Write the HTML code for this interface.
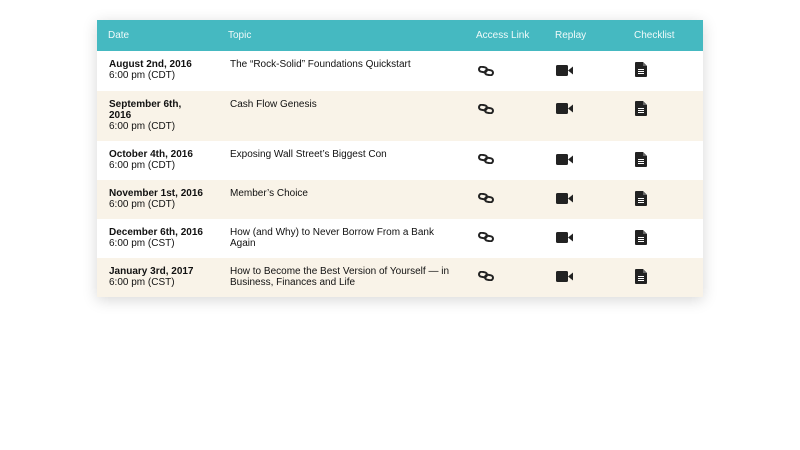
<!DOCTYPE html>
<html><head><style>
body{margin:0;background:#fff;font-family:"Liberation Sans",sans-serif;}
.t{position:absolute;left:97px;top:20px;width:606px;box-shadow:0 3px 14px rgba(0,0,0,.16);}
.h{height:31px;background:#45b9c1;color:#f0fafa;font-size:10px;position:relative}
.h span{position:absolute;top:10px}
.r{position:relative;font-size:10px;color:#111;line-height:11px}
.a{background:#f9f3e8}.b{background:#fff}
.d{position:absolute;left:12px;top:8px;width:105px}
.tp{position:absolute;left:133px;top:8px;width:222px}
.i{position:absolute}
</style></head><body>
<div class="t">
<div class="h"><span style="left:11px">Date</span><span style="left:131px">Topic</span><span style="left:379px">Access Link</span><span style="left:458px">Replay</span><span style="left:537px">Checklist</span></div>

<div class="r b" style="height:40px"><div class="d"><b>August 2nd, 2016</b><br>6:00 pm (CDT)</div><div class="tp">The “Rock-Solid” Foundations Quickstart</div>
<svg class="i" style="left:381px;top:15px" width="16" height="10" viewBox="0 0 16 10"><g fill="none" stroke="#222" stroke-width="2"><rect x="1" y="1" width="8" height="5" rx="2.5" transform="rotate(10 5 3.5)"/><rect x="7" y="4" width="8" height="5" rx="2.5" transform="rotate(10 11 6.5)"/></g></svg>
<svg class="i" style="left:459px;top:14px" width="18" height="11" viewBox="0 0 18 11"><rect x="0" y="0" width="12" height="11" rx="1.5" fill="#222"/><path d="M12 5.5 L17 1.5 V9.5Z" fill="#222"/></svg>
<svg class="i" style="left:538px;top:11px" width="12" height="15" viewBox="0 0 12 15"><path d="M0 1Q0 0 1 0H8L12 4V14Q12 15 11 15H1Q0 15 0 14Z" fill="#222"/><path d="M8 0V4H12" fill="#666"/><g stroke="#fff"><path d="M3 7.5H9M3 9.5H9M3 11.5H9"/></g></svg>
</div>

<div class="r a" style="height:50px"><div class="d"><b>September 6th,<br>2016</b><br>6:00 pm (CDT)</div><div class="tp">Cash Flow Genesis</div>
<svg class="i" style="left:381px;top:13px" width="16" height="10" viewBox="0 0 16 10"><g fill="none" stroke="#222" stroke-width="2"><rect x="1" y="1" width="8" height="5" rx="2.5" transform="rotate(10 5 3.5)"/><rect x="7" y="4" width="8" height="5" rx="2.5" transform="rotate(10 11 6.5)"/></g></svg>
<svg class="i" style="left:459px;top:12px" width="18" height="11" viewBox="0 0 18 11"><rect x="0" y="0" width="12" height="11" rx="1.5" fill="#222"/><path d="M12 5.5 L17 1.5 V9.5Z" fill="#222"/></svg>
<svg class="i" style="left:538px;top:10px" width="12" height="15" viewBox="0 0 12 15"><path d="M0 1Q0 0 1 0H8L12 4V14Q12 15 11 15H1Q0 15 0 14Z" fill="#222"/><path d="M8 0V4H12" fill="#666"/><g stroke="#fff"><path d="M3 7.5H9M3 9.5H9M3 11.5H9"/></g></svg>
</div>

<div class="r b" style="height:39px"><div class="d"><b>October 4th, 2016</b><br>6:00 pm (CDT)</div><div class="tp">Exposing Wall Street’s Biggest Con</div>
<svg class="i" style="left:381px;top:13px" width="16" height="10" viewBox="0 0 16 10"><g fill="none" stroke="#222" stroke-width="2"><rect x="1" y="1" width="8" height="5" rx="2.5" transform="rotate(10 5 3.5)"/><rect x="7" y="4" width="8" height="5" rx="2.5" transform="rotate(10 11 6.5)"/></g></svg>
<svg class="i" style="left:459px;top:13px" width="18" height="11" viewBox="0 0 18 11"><rect x="0" y="0" width="12" height="11" rx="1.5" fill="#222"/><path d="M12 5.5 L17 1.5 V9.5Z" fill="#222"/></svg>
<svg class="i" style="left:538px;top:11px" width="12" height="15" viewBox="0 0 12 15"><path d="M0 1Q0 0 1 0H8L12 4V14Q12 15 11 15H1Q0 15 0 14Z" fill="#222"/><path d="M8 0V4H12" fill="#666"/><g stroke="#fff"><path d="M3 7.5H9M3 9.5H9M3 11.5H9"/></g></svg>
</div>

<div class="r a" style="height:39px"><div class="d"><b>November 1st, 2016</b><br>6:00 pm (CDT)</div><div class="tp">Member’s Choice</div>
<svg class="i" style="left:381px;top:13px" width="16" height="10" viewBox="0 0 16 10"><g fill="none" stroke="#222" stroke-width="2"><rect x="1" y="1" width="8" height="5" rx="2.5" transform="rotate(10 5 3.5)"/><rect x="7" y="4" width="8" height="5" rx="2.5" transform="rotate(10 11 6.5)"/></g></svg>
<svg class="i" style="left:459px;top:13px" width="18" height="11" viewBox="0 0 18 11"><rect x="0" y="0" width="12" height="11" rx="1.5" fill="#222"/><path d="M12 5.5 L17 1.5 V9.5Z" fill="#222"/></svg>
<svg class="i" style="left:538px;top:11px" width="12" height="15" viewBox="0 0 12 15"><path d="M0 1Q0 0 1 0H8L12 4V14Q12 15 11 15H1Q0 15 0 14Z" fill="#222"/><path d="M8 0V4H12" fill="#666"/><g stroke="#fff"><path d="M3 7.5H9M3 9.5H9M3 11.5H9"/></g></svg>
</div>

<div class="r b" style="height:39px"><div class="d"><b>December 6th, 2016</b><br>6:00 pm (CST)</div><div class="tp">How (and Why) to Never Borrow From a Bank Again</div>
<svg class="i" style="left:381px;top:13px" width="16" height="10" viewBox="0 0 16 10"><g fill="none" stroke="#222" stroke-width="2"><rect x="1" y="1" width="8" height="5" rx="2.5" transform="rotate(10 5 3.5)"/><rect x="7" y="4" width="8" height="5" rx="2.5" transform="rotate(10 11 6.5)"/></g></svg>
<svg class="i" style="left:459px;top:13px" width="18" height="11" viewBox="0 0 18 11"><rect x="0" y="0" width="12" height="11" rx="1.5" fill="#222"/><path d="M12 5.5 L17 1.5 V9.5Z" fill="#222"/></svg>
<svg class="i" style="left:538px;top:11px" width="12" height="15" viewBox="0 0 12 15"><path d="M0 1Q0 0 1 0H8L12 4V14Q12 15 11 15H1Q0 15 0 14Z" fill="#222"/><path d="M8 0V4H12" fill="#666"/><g stroke="#fff"><path d="M3 7.5H9M3 9.5H9M3 11.5H9"/></g></svg>
</div>

<div class="r a" style="height:39px"><div class="d"><b>January 3rd, 2017</b><br>6:00 pm (CST)</div><div class="tp">How to Become the Best Version of Yourself — in Business, Finances and Life</div>
<svg class="i" style="left:381px;top:13px" width="16" height="10" viewBox="0 0 16 10"><g fill="none" stroke="#222" stroke-width="2"><rect x="1" y="1" width="8" height="5" rx="2.5" transform="rotate(10 5 3.5)"/><rect x="7" y="4" width="8" height="5" rx="2.5" transform="rotate(10 11 6.5)"/></g></svg>
<svg class="i" style="left:459px;top:13px" width="18" height="11" viewBox="0 0 18 11"><rect x="0" y="0" width="12" height="11" rx="1.5" fill="#222"/><path d="M12 5.5 L17 1.5 V9.5Z" fill="#222"/></svg>
<svg class="i" style="left:538px;top:11px" width="12" height="15" viewBox="0 0 12 15"><path d="M0 1Q0 0 1 0H8L12 4V14Q12 15 11 15H1Q0 15 0 14Z" fill="#222"/><path d="M8 0V4H12" fill="#666"/><g stroke="#fff"><path d="M3 7.5H9M3 9.5H9M3 11.5H9"/></g></svg>
</div>
</div>
</body></html>
